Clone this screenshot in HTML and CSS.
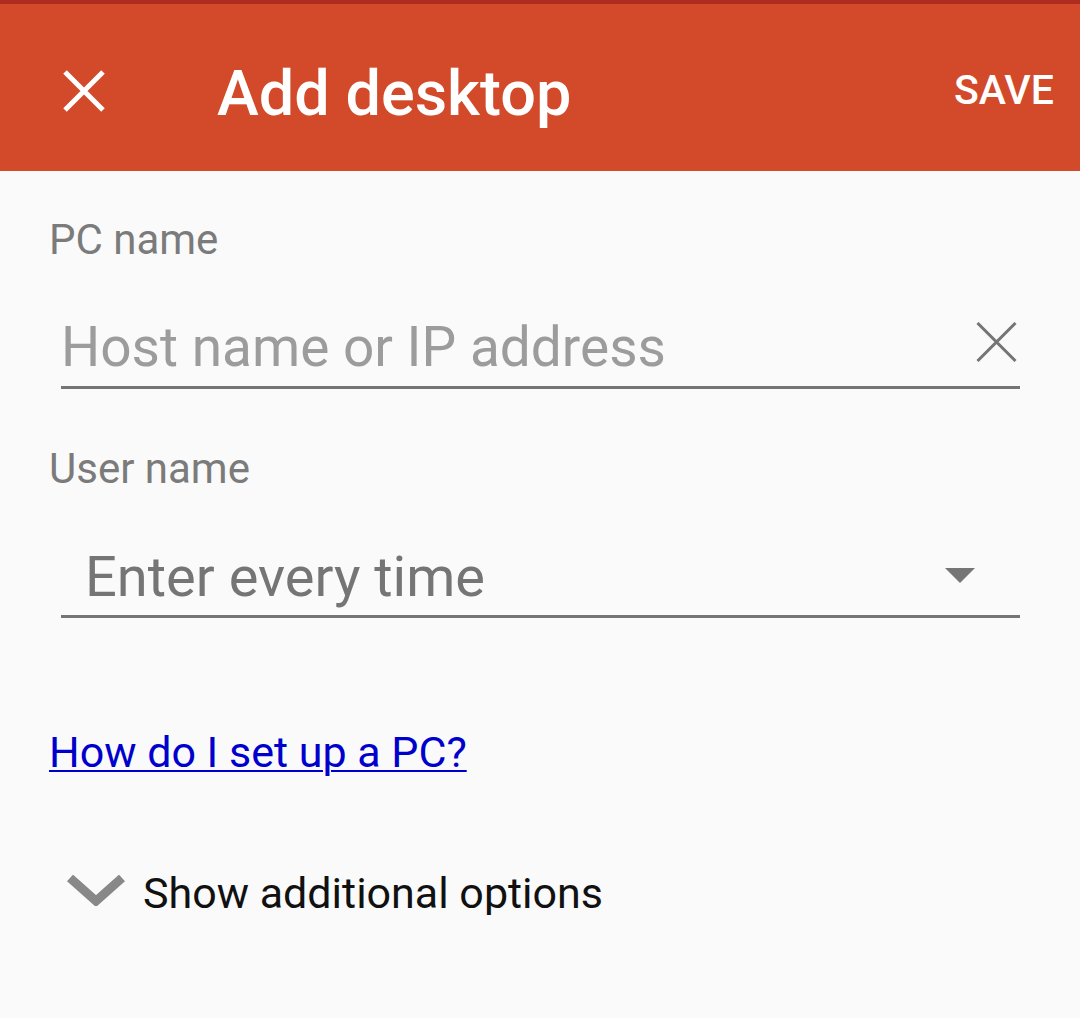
FILE: index.html
```html
<!DOCTYPE html>
<html>
<head>
<meta charset="utf-8">
<link rel="stylesheet" href="styles.css">
</head>
<body>
<div class="status-strip"></div>
<header class="appbar">
  <div class="close-btn">
    <svg width="42" height="42" viewBox="0 0 42 42"><path d="M2 2 L40 40 M40 2 L2 40" stroke="#fff" stroke-width="5" fill="none"/></svg>
  </div>
  <div class="title">Add desktop</div>
  <div class="save">SAVE</div>
</header>
<main class="form">
  <div class="label label-pc">PC name</div>
  <div class="field field-host">
    <span class="placeholder">Host name or IP address</span>
    <svg class="clear" width="41" height="40" viewBox="0 0 41 40"><path d="M1.5 1 L39.5 39 M39.5 1 L1.5 39" stroke="#757575" stroke-width="3" fill="none"/></svg>
  </div>
  <div class="label label-user">User name</div>
  <div class="field field-user">
    <span class="value">Enter every time</span>
    <svg class="caret" width="30" height="15" viewBox="0 0 30 15"><path d="M0 0 H30 L15 15 Z" fill="#757575"/></svg>
  </div>
  <a class="help" href="#">How do I set up a PC?</a>
  <div class="more">
    <svg class="chev" width="58" height="31" viewBox="0 0 58 31"><path d="M3 3 L29 26 L55 3" stroke="#888" stroke-width="9" fill="none"/></svg>
    <span class="more-text">Show additional options</span>
  </div>
</main>
</body>
</html>
```
FILE: styles.css
```css
html, body {
  margin: 0;
  padding: 0;
  background: #fafafa;
  font-family: Roboto, "Noto Sans", sans-serif;
}
.status-strip {
  height: 4px;
  background: #ad2c1e;
}
.appbar {
  height: 167px;
  background: #d24a29;
  display: flex;
  align-items: flex-start;
  color: #fff;
}
.close-btn {
  width: 42px;
  height: 42px;
  margin-left: 63px;
  margin-top: 66px;
}
.close-btn svg { display: block; }
.title {
  margin-left: 112px;
  margin-top: 58px;
  font-size: 63px;
  line-height: 1;
  font-weight: 500;
}
.save {
  margin-left: auto;
  margin-right: 26px;
  margin-top: 66px;
  font-size: 41px;
  line-height: 1;
  font-weight: 500;
}
.form {
  display: flex;
  flex-direction: column;
  padding: 0 60px 0 49px;
}
.label {
  font-size: 42px;
  line-height: 1;
  color: #7b7b7b;
}
.label-pc { margin-top: 48px; }
.label-user { margin-top: 59px; }
.field {
  margin-left: 12px;
  height: 85px;
  display: flex;
  align-items: flex-start;
  border-bottom: 3px solid #757575;
  margin-top: 40px;
}
.placeholder {
  flex: 1;
  margin-top: 19px;
  font-size: 55px;
  line-height: 1;
  color: #9c9c9c;
  padding-left: 0;
}
.clear {
  margin-top: 21px;
  margin-right: 3px;
}
.value {
  flex: 1;
  margin-top: 19px;
  padding-left: 24px;
  font-size: 56px;
  line-height: 1;
  color: #757575;
}
.caret {
  margin-top: 38px;
  margin-right: 45px;
}
.help {
  align-self: flex-start;
  margin-top: 113px;
  font-size: 43px;
  line-height: 1;
  color: #0000cc;
  text-decoration: underline;
  text-decoration-thickness: 2px;
  text-underline-offset: 3px;
}
.more {
  display: flex;
  align-items: flex-start;
  margin-top: 98px;
  margin-left: 18px;
}
.chev {
  margin-top: 3px;
  margin-right: 18px;
}
.more-text {
  font-size: 43px;
  line-height: 1;
  color: #111;
}
```
